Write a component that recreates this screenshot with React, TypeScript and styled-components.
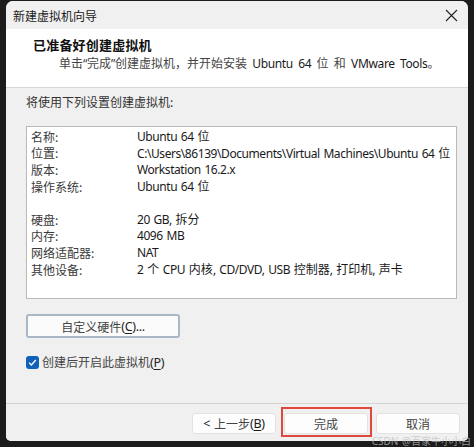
import React from "react";
import styled, { createGlobalStyle } from "styled-components";

const Global = createGlobalStyle`
  html, body { margin: 0; padding: 0; background: #1c1c1c; }
  body {
    font-family: "Noto Sans", "Noto Sans CJK SC", sans-serif;
    letter-spacing: -0.3px;
    word-spacing: 1px;
  }
  #root { width: 474px; height: 447px; overflow: hidden; position: relative; }
`;

const Page = styled.div`
  width: 474px;
  height: 447px;
  padding: 1px 6px 6px 6px;
  box-sizing: border-box;
  background: #1c1c1c;
  position: relative;
`;

const Window = styled.div`
  width: 462px;
  height: 440px;
  background: #f0f0f0;
  border-radius: 7px 7px 5px 5px;
  overflow: hidden;
  display: flex;
  flex-direction: column;
`;

const TitleBar = styled.div`
  height: 28px;
  flex: none;
  display: flex;
  align-items: center;
  justify-content: space-between;
  padding: 0 9px 0 7px;
  background: #f0f0f0;
  font-size: 12px;
  color: #1a1a1a;
`;

const CloseBtn = styled.div`
  width: 16px;
  height: 16px;
  display: flex;
  align-items: center;
  justify-content: center;
`;

const Header = styled.div`
  height: 59px;
  flex: none;
  background: #ffffff;
  border-bottom: 1px solid #d6d6d6;
  padding: 7px 0 0 27px;
  box-sizing: border-box;
`;

const HeaderTitle = styled.div`
  font-family: "Noto Sans CJK SC", sans-serif;
  font-weight: 700;
  font-size: 13px;
  line-height: 17px;
  color: #111;
  letter-spacing: 0.2px;
`;

const HeaderSub = styled.div`
  margin: 1px 0 0 26px;
  font-size: 12px;
  line-height: 17px;
  color: #1a1a1a;
  white-space: nowrap;
  letter-spacing: -0.35px;
  word-spacing: 2.5px;
`;

const Quote = styled.span`
  font-family: "Noto Sans", sans-serif;
  color: #444;
  font-size: 12px;
`;

const Cjk = styled.span<{ $dark?: boolean }>`
  font-family: "Noto Sans CJK SC", sans-serif;
  color: ${(p) => (p.$dark ? "#1a1a1a" : "#444")};
  font-size: 12px;
  letter-spacing: 0;
`;

const Body = styled.div`
  flex: 1;
  display: flex;
  flex-direction: column;
  padding: 6px 11px 0 20px;
  border-bottom: 1px solid #d4d4d4;
`;

const Intro = styled.div`
  font-family: "Noto Sans CJK SC", sans-serif;
  font-size: 12px;
  line-height: 16px;
  color: #333;
  letter-spacing: 0;
  margin-bottom: 16px;
`;

const SummaryBox = styled.div`
  height: 173px;
  box-sizing: border-box;
  background: #ffffff;
  border: 1px solid #b9b9b9;
  padding: 1px 4px;
  display: grid;
  grid-template-columns: 106px 1fr;
  grid-auto-rows: 16.6px;
  align-items: center;
`;

const Label = styled.div`
  font-family: "Noto Sans CJK SC", sans-serif;
  font-size: 12px;
  color: #3a3a3a;
  letter-spacing: 0;
  white-space: nowrap;
`;

const Value = styled.div`
  font-size: 12px;
  color: #1a1a1a;
  white-space: nowrap;
  letter-spacing: -0.43px;
`;

const Spacer = styled.div`
  grid-column: 1 / 3;
`;

const CustomButton = styled.div`
  margin-top: 15px;
  width: 154px;
  height: 24px;
  box-sizing: border-box;
  border: 2px solid #a9b8c6;
  border-radius: 3px;
  background: #fbfbfb;
  display: flex;
  align-items: center;
  justify-content: center;
  font-size: 12.5px;
  color: #222;
`;

const U = styled.span`
  text-decoration: underline;
  text-underline-offset: 2px;
`;

const CheckRow = styled.div`
  margin-top: 15px;
  display: flex;
  align-items: center;
  gap: 3px;
  font-size: 12.5px;
  color: #222;
`;

const CheckBox = styled.div`
  width: 13px;
  height: 13px;
  border-radius: 3px;
  background: #0f62b8;
  display: flex;
  align-items: center;
  justify-content: center;
`;

const Footer = styled.div`
  height: 37px;
  flex: none;
  display: flex;
  justify-content: flex-end;
  align-items: flex-start;
  gap: 8px;
  padding: 9px 8px 0 0;
  box-sizing: border-box;
  background: #f0f0f0;
`;

const Btn = styled.div`
  position: relative;
  width: 84px;
  height: 21px;
  box-sizing: border-box;
  background: #fdfdfd;
  border: 1px solid #e2e2e2;
  border-radius: 3px;
  display: flex;
  align-items: center;
  justify-content: center;
  font-size: 12.5px;
  color: #1a1a1a;
`;

const Highlight = styled.div`
  position: absolute;
  left: -4px;
  right: -5px;
  top: -7px;
  bottom: -4px;
  border: 2px solid #e0483c;
  pointer-events: none;
`;

const Watermark = styled.div`
  position: absolute;
  right: 3px;
  bottom: 0px;
  font-size: 10px;
  line-height: 12px;
  letter-spacing: 0;
  color: rgba(190, 190, 190, 0.75);
  white-space: nowrap;
  font-family: "Noto Sans", "Noto Sans CJK SC", sans-serif;
`;

const rows1: [string, React.ReactNode][] = [
  ["名称:", <>Ubuntu 64 <Cjk $dark>位</Cjk></>],
  ["位置:", <>C:\Users\86139\Documents\Virtual Machines\Ubuntu 64 <Cjk $dark>位</Cjk></>],
  ["版本:", <>Workstation 16.2.x</>],
  ["操作系统:", <>Ubuntu 64 <Cjk $dark>位</Cjk></>],
];

const rows2: [string, React.ReactNode][] = [
  ["硬盘:", <>20 GB, <Cjk $dark>拆分</Cjk></>],
  ["内存:", <>4096 MB</>],
  ["网络适配器:", <>NAT</>],
  [
    "其他设备:",
    <>
      2 <Cjk $dark>个</Cjk> CPU <Cjk $dark>内核</Cjk>, CD/DVD, USB <Cjk $dark>控制器</Cjk>, <Cjk $dark>打印机</Cjk>, <Cjk $dark>声卡</Cjk>
    </>,
  ],
];

export default function App() {
  return (
    <>
      <Global />
      <Page>
        <Window>
          <TitleBar>
            <Cjk $dark>新建虚拟机向导</Cjk>
            <CloseBtn>
              <svg width="13" height="13" viewBox="0 0 13 13">
                <path d="M1 1 L12 12 M12 1 L1 12" stroke="#222" strokeWidth="1.1" />
              </svg>
            </CloseBtn>
          </TitleBar>
          <Header>
            <HeaderTitle>已准备好创建虚拟机</HeaderTitle>
            <HeaderSub>
              <Cjk>单击</Cjk>
              <Quote>“</Quote>
              <Cjk>完成</Cjk>
              <Quote>”</Quote>
              <Cjk>创建虚拟机，并开始安装</Cjk> Ubuntu 64 <Cjk>位</Cjk> <Cjk>和</Cjk> VMware Tools<Cjk>。</Cjk>
            </HeaderSub>
          </Header>
          <Body>
            <Intro>将使用下列设置创建虚拟机:</Intro>
            <SummaryBox>
              {rows1.map(([l, v]) => (
                <React.Fragment key={l}>
                  <Label>{l}</Label>
                  <Value>{v}</Value>
                </React.Fragment>
              ))}
              <Spacer />
              {rows2.map(([l, v]) => (
                <React.Fragment key={l}>
                  <Label>{l}</Label>
                  <Value>{v}</Value>
                </React.Fragment>
              ))}
            </SummaryBox>
            <CustomButton>
              <Cjk>自定义硬件</Cjk>(<U>C</U>)...
            </CustomButton>
            <CheckRow>
              <CheckBox>
                <svg width="9" height="9" viewBox="0 0 9 9">
                  <path d="M1.2 4.8 L3.4 7 L7.8 2" stroke="#fff" strokeWidth="1.3" fill="none" />
                </svg>
              </CheckBox>
              <span>
                <Cjk>创建后开启此虚拟机</Cjk>(<U>P</U>)
              </span>
            </CheckRow>
          </Body>
          <Footer>
            <Btn>
              {"<"}&nbsp;<Cjk>上一步</Cjk>(<U>B</U>)
            </Btn>
            <Btn>
              <Cjk>完成</Cjk>
              <Highlight />
            </Btn>
            <Btn>
              <Cjk>取消</Cjk>
            </Btn>
          </Footer>
        </Window>
        <Watermark>CSDN @百家牛小小白</Watermark>
      </Page>
    </>
  );
}
